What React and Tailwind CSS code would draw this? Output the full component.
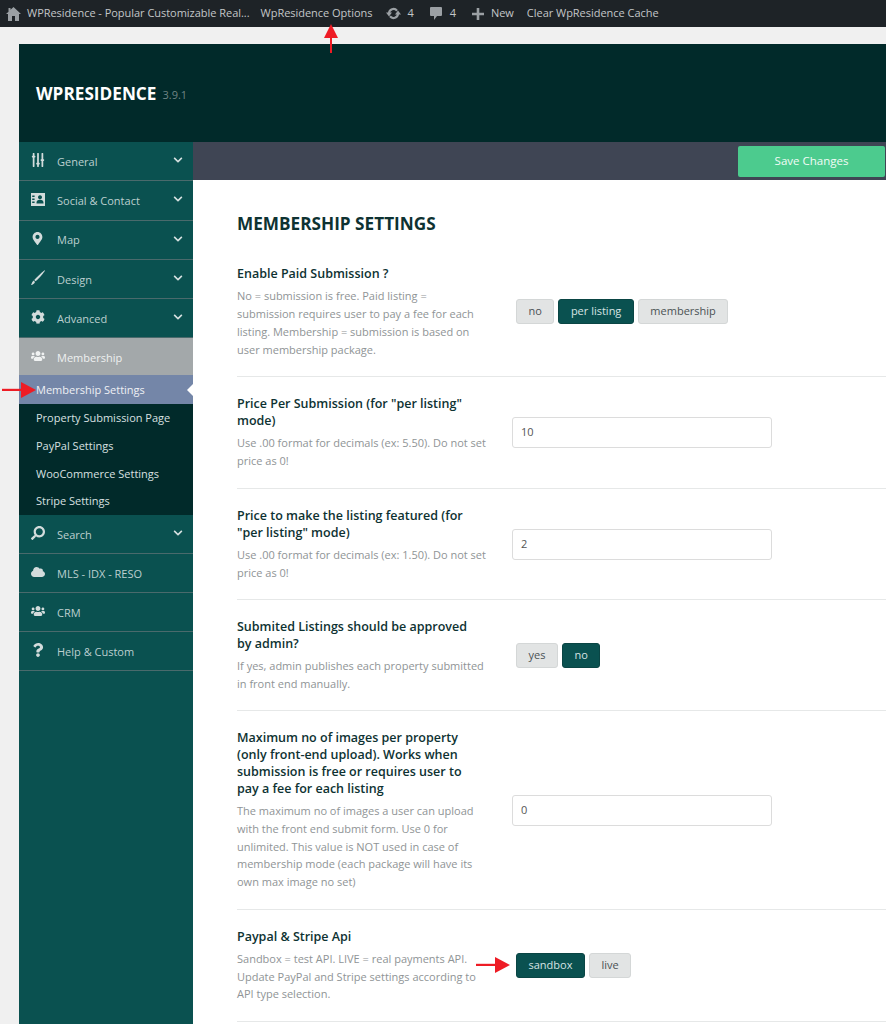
import React from "react";
import { FaSlidersH, FaMapMarkerAlt, FaCog, FaUsers, FaSearch, FaCloud, FaQuestion, FaChevronDown } from "react-icons/fa";

const Arrow = ({ className }) => (
  <svg className={className} width="34" height="16" viewBox="0 0 34 16"><rect x="0" y="6.8" width="20" height="2.2" fill="#ee1c25" /><path d="M19 0 L34 8 L19 16 Z" fill="#ee1c25" /></svg>
);

const Top = ({ children, className = "" }) => <span className={`text-[11px] tracking-[-0.03px] text-[#c3c6c8] whitespace-nowrap ${className}`}>{children}</span>;

const SlidersV = ({ size, color }) => <FaSlidersH size={size} color={color} className="rotate-90" />;
const Contact = ({ color }) => (
  <svg width="14" height="13" viewBox="0 0 14 13"><path fill={color} fillRule="evenodd" d="M0 0H14V13H0ZM9 2.2a2 2 0 1 0 .01 0ZM5.5 9.8c0-2 1.2-3 3.5-3s3.5 1 3.5 3v.8h-7ZM1.2 2.5V4H3.6V2.5ZM1.2 5.5V7H3.6V5.5ZM1.2 8.5V10H3.6V8.5Z" /></svg>
);
const Brush = ({ color }) => (
  <svg width="14" height="15" viewBox="0 0 14 15"><path fill={color} d="M13.6 0.3 L14 0.8 C11 5 7 9.5 4.6 11.2 L3.2 9.9 C5.6 7.4 10 3 13.6 0.3 Z M2.7 10.6 L4 11.9 C3.3 13.6 1.8 14.6 0 15 C1 13.6 1 11.6 2.7 10.6 Z" /></svg>
);
const FlipSearch = ({ size, color }) => <FaSearch size={size} color={color} className="-scale-x-100" />;

const Nav = ({ icon: Icon, label, chev = true, size = 14, h = "h-[39.25px]" }) => (
  <div className={`relative ${h} shrink-0 border-b border-[#4a6a6c] flex items-center pl-[8px] pr-[10px]`}>
    <span className="w-[21px] flex justify-center -mt-[2px]"><Icon size={size} color="#d3dcdc" /></span>
    <span className="ml-[9px] pt-[2px] text-[11px] text-[#bccfcf] flex-1">{label}</span>
    {chev && <FaChevronDown size={10} color="#d5e0e0" className="-mt-[2px]" />}
  </div>
);

const Sub = ({ children }) => <div className="h-[28.3px] pl-[17px] flex items-center text-[11px] text-[#d8e0e0]">{children}</div>;

const Seg = ({ label, on }) => (
  <span className={`h-[25px] px-[11.5px] rounded-[3px] flex items-center text-[11px] border ${on ? "bg-[#0a5150] border-[#0a4544] text-[#d6e3e3]" : "bg-[#e2e4e4] border-[#d4d7d7] text-[#4b5254]"}`}>{label}</span>
);

const Input = ({ value }) => (
  <div className="w-[260px] h-[31px] border border-[#dcdcdc] rounded-[3px] flex items-center pl-[8px] text-[11px] text-[#555]">{value}</div>
);

const Row = ({ title, desc, children, h, seg, up }) => (
  <div className={`${h} flex border-b border-[#e6e8e8] items-center`}>
    <div className="w-[275px] shrink-0">
      <div className="w-[245px] text-[12.5px] leading-[17px] font-semibold text-[#0e3232] mb-[5px]">{title}</div>
      <div className="w-[250px] text-[11px] leading-[17.8px] text-[#8f9496]">{desc}</div>
    </div>
    <div className={`flex gap-[4px] ${seg ? "ml-[4px]" : ""} ${up ? "mb-[2px]" : ""}`}>{children}</div>
  </div>
);

export default function App() {
  return (
    <div className="relative w-[886px] h-[1024px] overflow-hidden bg-[#f0f0f0] font-['Open_Sans',sans-serif]">
      <div className="h-[27px] bg-[#1e2327] flex items-center pl-[6px]">
        <svg width="15" height="14" viewBox="0 0 15 14"><path fill="#9ba0a4" d="M7.5 0 L15 7 L13 7 L13 14 L9 14 L9 9 L6 9 L6 14 L2 14 L2 7 L0 7 L2.5 4.7 L2.5 1 L4.5 1 L4.5 2.8 Z" /></svg>
        <Top className="ml-[6px]">WPResidence - Popular Customizable Real...</Top>
        <Top className="ml-[11px]">WpResidence Options</Top>
        <svg className="ml-[14px]" width="15" height="13" viewBox="0 0 15 13" fill="none"><path d="M3 6.5a4.5 4.5 0 0 1 8-2.8" stroke="#9ba0a4" strokeWidth="2.2" /><path d="M12 6.5a4.5 4.5 0 0 1 -8 2.8" stroke="#9ba0a4" strokeWidth="2.2" /><path d="M0 5.5 H6 L3 9.5 Z M15 7.5 H9 L12 3.5 Z" fill="#9ba0a4" /></svg>
        <Top className="ml-[6px]">4</Top>
        <svg className="ml-[16px]" width="12" height="14" viewBox="0 0 12 14"><path fill="#9ba0a4" d="M1 0 H11 A1 1 0 0 1 12 1 V8 A1 1 0 0 1 11 9 H7 L4 13 V9 H1 A1 1 0 0 1 0 8 V1 A1 1 0 0 1 1 0 Z" /></svg>
        <Top className="ml-[8px]">4</Top>
        <svg className="ml-[16px]" width="12" height="12" viewBox="0 0 12 12"><path fill="#9ba0a4" d="M4.7 0 H7.3 V4.7 H12 V7.3 H7.3 V12 H4.7 V7.3 H0 V4.7 H4.7 Z" /></svg>
        <Top className="ml-[7px]">New</Top>
        <Top className="ml-[13px]">Clear WpResidence Cache</Top>
      </div>
      <svg className="absolute left-[324px] top-[24px]" width="14" height="29" viewBox="0 0 14 29"><path d="M7 0 L14 14 L0 14 Z" fill="#ee1c25" /><rect x="6" y="13" width="2" height="16" fill="#ee1c25" /></svg>

      <div className="ml-[19px] mt-[17px] h-[980px] flex flex-col">
        <div className="h-[98px] shrink-0 bg-[#012a2a] flex items-center pl-[17px] pt-[2px]">
          <span className="text-[17.2px] font-bold text-white">WPRESIDENCE</span>
          <span className="ml-[6px] mt-[3px] text-[11px] text-[#6f8484]">3.9.1</span>
        </div>
        <div className="flex flex-1 min-h-0">
          <div className="w-[174px] shrink-0 bg-[#0a5150] flex flex-col">
            <Nav icon={SlidersV} label="General" />
            <Nav icon={Contact} label="Social & Contact" />
            <Nav icon={FaMapMarkerAlt} label="Map" size={13} />
            <Nav icon={Brush} label="Design" />
            <Nav icon={FaCog} label="Advanced" />
            <div className="h-[37px] shrink-0 bg-[#a3a8aa] flex items-center pl-[8px]">
              <span className="w-[21px] flex justify-center -mt-[2px]"><FaUsers size={14} color="#f0f2f2" /></span>
              <span className="ml-[9px] pt-[2px] text-[11px] text-[#eef0f0]">Membership</span>
            </div>
            <div className="relative h-[29px] shrink-0 bg-[#7486a8] flex items-center pl-[17px] pt-[1px] text-[11px] text-[#eef0f4]">
              Membership Settings
              <span className="absolute right-0 top-[9px] w-0 h-0 border-y-[6px] border-y-transparent border-r-[6px] border-r-white" />
            </div>
            <div className="bg-[#012a2a] h-[111px] shrink-0 flex flex-col pt-[0.5px]">
              <Sub>Property Submission Page</Sub>
              <Sub>PayPal Settings</Sub>
              <Sub>WooCommerce Settings</Sub>
              <Sub>Stripe Settings</Sub>
            </div>
            <Nav h="h-[39px]" icon={FlipSearch} label="Search" />
            <Nav h="h-[39px]" icon={FaCloud} label="MLS - IDX - RESO" chev={false} />
            <Nav h="h-[39px]" icon={FaUsers} label="CRM" chev={false} />
            <Nav h="h-[39px]" icon={FaQuestion} label="Help & Custom" chev={false} />
          </div>
          <div className="flex-1 min-w-0 flex flex-col bg-white">
            <div className="h-[38px] shrink-0 bg-[#3f4554] flex justify-end items-center pr-[1px]">
              <span className="w-[147px] h-[31px] rounded-[2px] bg-[#4ccb8e] flex items-center justify-center text-[11.5px] text-[#f2fbf6]">Save Changes</span>
            </div>
            <div className="pl-[44px]">
              <div className="h-[76px] pt-[33px] text-[17.2px] leading-[22px] font-bold text-[#0e3232]">MEMBERSHIP SETTINGS</div>
              <Row seg up h="h-[121px] pb-[8px]" title="Enable Paid Submission ?" desc="No = submission is free. Paid listing = submission requires user to pay a fee for each listing. Membership = submission is based on user membership package.">
                <Seg label="no" /><Seg label="per listing" on /><Seg label="membership" />
              </Row>
              <Row h="h-[112px]" title={'Price Per Submission (for "per listing" mode)'} desc="Use .00 format for decimals (ex: 5.50). Do not set price as 0!">
                <Input value="10" />
              </Row>
              <Row h="h-[111px]" title={'Price to make the listing featured (for "per listing" mode)'} desc="Use .00 format for decimals (ex: 1.50). Do not set price as 0!">
                <Input value="2" />
              </Row>
              <Row seg h="h-[111px]" title="Submited Listings should be approved by admin?" desc="If yes, admin publishes each property submitted in front end manually.">
                <Seg label="yes" /><Seg label="no" on />
              </Row>
              <Row h="h-[199px]" title="Maximum no of images per property (only front-end upload). Works when submission is free or requires user to pay a fee for each listing" desc="The maximum no of images a user can upload with the front end submit form. Use 0 for unlimited. This value is NOT used in case of membership mode (each package will have its own max image no set)">
                <Input value="0" />
              </Row>
              <Row seg h="h-[112px]" title="Paypal & Stripe Api" desc="Sandbox = test API. LIVE = real payments API. Update PayPal and Stripe settings according to API type selection.">
                <Seg label="sandbox" on /><Seg label="live" />
              </Row>
            </div>
          </div>
        </div>
      </div>
      <Arrow className="absolute left-[2px] top-[382px]" />
      <Arrow className="absolute left-[476px] top-[957px]" />
    </div>
  );
}
